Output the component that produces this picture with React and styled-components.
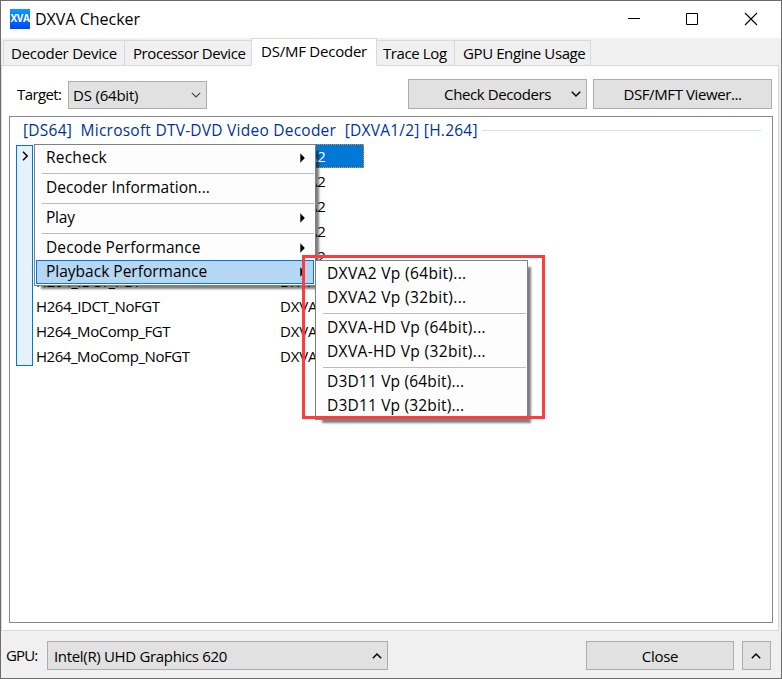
import React, { useState } from "react";
import styled, { createGlobalStyle, css } from "styled-components";

const GlobalStyle = createGlobalStyle`
  * {
    box-sizing: border-box;
  }
  body {
    margin: 0;
    overflow: hidden;
  }
`;

const Window = styled.div`
  position: relative;
  display: flex;
  flex-direction: column;
  width: 782px;
  height: 679px;
  border: 1px solid #6d6b6e;
  background: #f0f0f0;
  color: #000;
  font: 15px "Open Sans", "Noto Sans", sans-serif;
  white-space: pre;
  cursor: default;
`;

const Text = styled.span`
  letter-spacing: ${(p) => p.$ls || 0}px;
`;

const TitleBar = styled.div`
  display: flex;
  align-items: center;
  height: 37px;
  flex: none;
  padding-left: 9px;
  background: #fff;
`;

const Logo = styled.div`
  width: 20px;
  height: 20px;
  margin: 0 5px 1px 0;
  background: linear-gradient(#0a9bff, #0044ff);
  color: #fff;
  font-size: 10px;
  font-weight: 700;
  line-height: 19px;
  text-align: center;
  letter-spacing: -0.4px;
`;

const Title = styled.div`
  flex: 1;
  font-size: 16px;
  line-height: 22px;
  padding-bottom: 1px;
  letter-spacing: ${(p) => p.$ls}px;
`;

const WindowButtons = styled.div`
  display: flex;
  margin-right: 1px;
  svg {
    display: block;
    width: 58px;
    height: 37px;
  }
`;

const Tabs = styled.div`
  display: flex;
  align-items: flex-end;
  flex: none;
  height: 28px;
  padding-left: 2px;
  margin-bottom: -1px;
`;

const Tab = styled.div`
  width: ${(p) => p.$w}px;
  height: 26px;
  padding-left: ${(p) => p.$pad}px;
  border: 1px solid #d9d9d9;
  border-left-width: ${(p) => (p.$first ? 1 : 0)}px;
  line-height: 24px;
  ${(p) =>
    p.$active &&
    css`
      height: 28px;
      margin-left: -1px;
      border-left-width: 1px;
      border-bottom-color: #fff;
      background: #fff;
      position: relative;
    `}
`;

const Page = styled.div`
  display: flex;
  flex-direction: column;
  flex: none;
  width: 778px;
  height: 566px;
  padding: 13px 5px 7px 7px;
  border: 1px solid #d9d9d9;
  background: #fff;
`;

const Toolbar = styled.div`
  display: flex;
  height: 30px;
  flex: none;
  margin-bottom: 7px;
  align-items: flex-end;
`;

const Label = styled.div`
  width: ${(p) => p.$w}px;
  padding: 0 0 2px ${(p) => p.$pad}px;
  line-height: 26px;
`;

const Button = styled.div`
  display: flex;
  align-items: center;
  justify-content: ${(p) => (p.$left ? "flex-start" : "center")};
  position: relative;
  width: ${(p) => p.$w}px;
  height: ${(p) => p.$h || 30}px;
  padding-left: ${(p) => (p.$left ? p.$left : 0)}px;
  border: 1px solid #adadad;
  background: #e1e1e1;
  svg {
    position: absolute;
    right: ${(p) => p.$arrow || 5}px;
  }
`;

const Gap = styled.div`
  width: ${(p) => p.$w}px;
  flex: none;
`;

const ListBox = styled.div`
  flex: 1;
  padding: 4px 11px 0 6px;
  border: 1px solid #828790;
`;

const GroupHeader = styled.div`
  display: flex;
  align-items: center;
  height: 23px;
  padding: 0 0 5px 7px;
  color: #003399;
  font-size: 15.5px;
  &::after {
    content: "";
    flex: 1;
    height: 1px;
    margin-left: 4px;
    background: #d5dff0;
  }
`;

const ListBody = styled.div`
  display: flex;
`;

const Strip = styled.div`
  width: 17px;
  height: 221px;
  margin-top: 1px;
  padding: 5px 0 0 4px;
  border: 1px solid #0078d7;
  background: #e5f1fb;
  svg {
    display: block;
  }
`;

const Row = styled.div`
  display: flex;
  height: 25px;
  padding-left: 3px;
  line-height: 25px;
`;

const NameCell = styled.div`
  width: 241px;
`;

const TypeCell = styled.div`
  width: 87px;
  height: 24px;
  padding-left: 3px;
  ${(p) =>
    p.$selected &&
    css`
      padding-left: 2px;
      line-height: 23px;
      border: 1px dotted #ff8728;
      background: #0078d7;
      color: #fff;
    `}
`;

const Footer = styled.div`
  display: flex;
  align-items: center;
  height: 41px;
  margin-top: 4px;
`;

const Menu = styled.div`
  position: absolute;
  left: ${(p) => p.$x - 1}px;
  top: ${(p) => p.$y - 1}px;
  width: ${(p) => p.$w}px;
  padding: 1px;
  border: 1px solid #808080;
  background: #fdfdfd;
  box-shadow: 5px 5px 2px -2px rgba(0, 0, 0, 0.5);
  font-size: 15.5px;
`;

const MenuItem = styled.div`
  display: flex;
  align-items: center;
  justify-content: space-between;
  height: 24px;
  padding: 0 8px 0 9px;
  border: 1px solid ${(p) => (p.$active ? "#0078d7" : "transparent")};
  background: ${(p) => (p.$active ? "#b5d7f3" : "transparent")};
  line-height: 20px;
  ${Text} {
    padding-bottom: 2px;
  }
`;

const Separator = styled.div`
  height: 1px;
  margin: 3px 0 2px 6px;
  background: #bdbdbd;
`;

const RedFrame = styled.div`
  position: absolute;
  left: 301px;
  top: 254px;
  width: 243px;
  height: 164px;
  border: 3px solid #ff3b3b;
`;

const Chevron = ({ up, color = "#000", w = 1.5 }) => (
  <svg width="10" height="8" viewBox="0 0 10 8" fill="none" stroke={color} strokeWidth={w}>
    <path d={up ? "M.8 6.2 5 2l4.2 4.2" : "M.8 1.8 5 6l4.2-4.2"} />
  </svg>
);

const Arrow = () => (
  <svg width="5" height="10" viewBox="0 0 5 10">
    <path d="M.3.3 4.8 5 .3 9.7z" />
  </svg>
);

const tabs = [
  { name: "Decoder Device", w: 122, pad: 7, ls: -0.25 },
  { name: "Processor Device", w: 127, pad: 8, ls: -0.43 },
  { name: "DS/MF Decoder", w: 126, pad: 9, ls: -0.23 },
  { name: "Trace Log", w: 78, pad: 6, ls: -0.4 },
  { name: "GPU Engine Usage", w: 136, pad: 8, ls: -0.4 },
];

const rows = [
  { name: "", ls: 0 },
  { name: "", ls: 0 },
  { name: "", ls: 0 },
  { name: "", ls: 0 },
  { name: "", ls: 0 },
  { name: "H264_IDCT_FGT", ls: -0.4 },
  { name: "H264_IDCT_NoFGT", ls: -0.42 },
  { name: "H264_MoComp_FGT", ls: -0.45 },
  { name: "H264_MoComp_NoFGT", ls: -0.45 },
];

const mainMenu = [
  { name: "Recheck", sub: true, ls: 0.2 },
  null,
  { name: "Decoder Information...", ls: 0.02 },
  null,
  { name: "Play", sub: true, ls: -0.2 },
  null,
  { name: "Decode Performance", sub: true, ls: 0.1 },
  { name: "Playback Performance", sub: true, ls: 0 },
];

const subMenu = [
  { name: "DXVA2 Vp (64bit)...", ls: 0.35 },
  { name: "DXVA2 Vp (32bit)...", ls: 0.35 },
  null,
  { name: "DXVA-HD Vp (64bit)...", ls: 0.35 },
  { name: "DXVA-HD Vp (32bit)...", ls: 0.35 },
  null,
  { name: "D3D11 Vp (64bit)...", ls: 0.18 },
  { name: "D3D11 Vp (32bit)...", ls: 0.18 },
];

function PopupMenu({ items, x, y, w, active }) {
  return (
    <Menu $x={x} $y={y} $w={w}>
      {items.map((item, i) =>
        item ? (
          <MenuItem key={i} $active={item.name === active}>
            <Text $ls={item.ls}>{item.name}</Text>
            {item.sub && <Arrow />}
          </MenuItem>
        ) : (
          <Separator key={i} />
        )
      )}
    </Menu>
  );
}

function App() {
  const [tab, setTab] = useState(2);

  return (
    <Window>
      <GlobalStyle />
      <TitleBar>
        <Logo>XVA</Logo>
        <Title $ls={0}>DXVA Checker</Title>
        <WindowButtons>
          <svg viewBox="0 0 58 37">
            <path d="M22 17.5h12" stroke="#000" />
          </svg>
          <svg viewBox="0 0 58 37">
            <path d="M22.5 12.5h11v11h-11z" stroke="#000" fill="none" />
          </svg>
          <svg viewBox="0 0 58 37">
            <path d="M23 12 35 24M35 12 23 24" stroke="#000" strokeWidth="1.1" />
          </svg>
        </WindowButtons>
      </TitleBar>

      <Tabs>
        {tabs.map((t, i) => (
          <Tab
            key={t.name}
            $w={t.w}
            $pad={t.pad}
            $first={i === 0}
            $active={i === tab}
            onClick={() => setTab(i)}
          >
            <Text $ls={t.ls}>{t.name}</Text>
          </Tab>
        ))}
      </Tabs>

      <Page>
        <Toolbar>
          <Label $w={59} $pad={8}>
            <Text $ls={-0.6}>Target:</Text>
          </Label>
          <Button $w={139} $h={28} $left={4}>
            <Text $ls={-0.2}>DS (64bit)</Text>
            <Chevron color="#444" w={1.1} />
          </Button>
          <Gap $w={201} />
          <Button $w={179}>
            <Text $ls={-0.4}>Check Decoders</Text>
            <Chevron />
          </Button>
          <Gap $w={6} />
          <Button $w={179}>
            <Text $ls={-0.4}>DSF/MFT Viewer...</Text>
          </Button>
        </Toolbar>

        <ListBox>
          <GroupHeader>
            <Text $ls={0.24}>{"[DS64]  Microsoft DTV-DVD Video Decoder  [DXVA1/2] [H.264]"}</Text>
          </GroupHeader>
          <ListBody>
            <Strip>
              <svg width="8" height="10" viewBox="0 0 8 10" fill="none" stroke="#000" strokeWidth="1.5">
                <path d="M2 .8 6.2 5 2 9.2" />
              </svg>
            </Strip>
            <div>
              {rows.map((row, i) => (
                <Row key={i}>
                  <NameCell>
                    <Text $ls={row.ls}>{row.name}</Text>
                  </NameCell>
                  <TypeCell $selected={i === 0}>
                    <Text $ls={-0.2}>DXVA2</Text>
                  </TypeCell>
                </Row>
              ))}
            </div>
          </ListBody>
        </ListBox>
      </Page>

      <Footer>
        <Label $w={46} $pad={5}>
          <Text $ls={-0.9}>GPU:</Text>
        </Label>
        <Button $w={341} $h={29} $left={6}>
          <Text $ls={-0.33}>Intel(R) UHD Graphics 620</Text>
          <Chevron up />
        </Button>
        <Gap $w={198} />
        <Button $w={148} $h={29}>
          <Text $ls={-0.3}>Close</Text>
        </Button>
        <Gap $w={8} />
        <Button $w={29} $h={29} $arrow={9}>
          <Chevron up />
        </Button>
      </Footer>

      <PopupMenu items={mainMenu} x={34} y={144} w={282} active="Playback Performance" />
      <PopupMenu items={subMenu} x={315} y={260} w={213} />
      <RedFrame />
    </Window>
  );
}

export default App;
